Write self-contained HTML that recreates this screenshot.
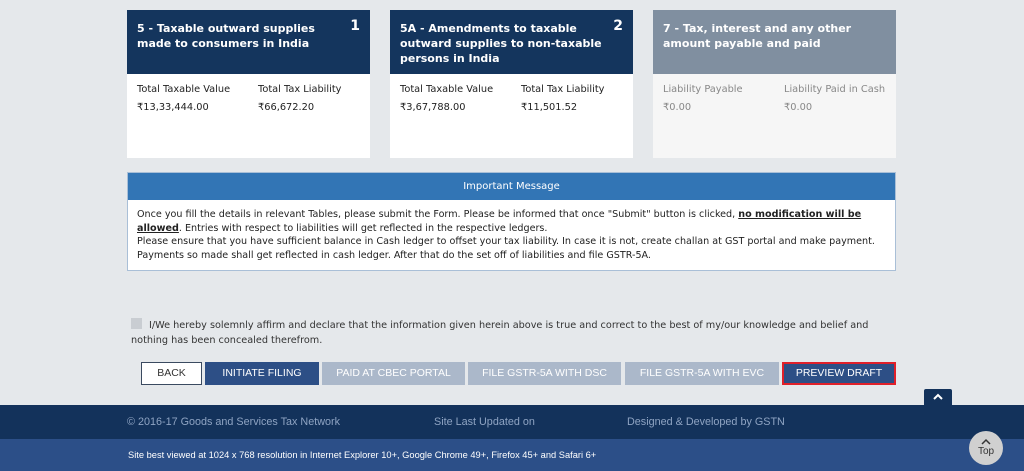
<!DOCTYPE html>
<html><head><meta charset="utf-8"><style>
*{margin:0;padding:0;box-sizing:border-box}
body{width:1024px;height:471px;background:#e5e8eb;font-family:"DejaVu Sans","Liberation Sans",sans-serif;position:relative;overflow:hidden;color:#222}
.card{position:absolute;top:10px;width:243px;height:148px;background:#fff}
.card .h{height:64px;background:#14355d;color:#fff;font-weight:bold;font-size:11px;line-height:15px;padding:11px 10px 0 10px;position:relative}
.card .h .n{position:absolute;right:10px;top:9px;font-size:14px}
.card .b{font-size:9.8px;padding:10px 10px;position:relative}
.card .b div{position:absolute}
.msg{position:absolute;left:127px;top:172px;width:769px;height:99px;background:#fff;border:1px solid #a9bfd7}
.msg .h{height:27px;background:#3275b5;color:#fff;font-size:10px;text-align:center;line-height:27px}
.msg .t{font-size:9.6px;line-height:13.5px;padding:8px 9px}
.aff{position:absolute;left:131px;top:318px;width:740px;font-size:9.7px;line-height:14.5px;color:#333}
.cb{display:inline-block;width:11px;height:11px;background:#c9cdd2;vertical-align:-1px;margin-right:7px}
.btn{position:absolute;top:362px;height:23px;font-family:"Liberation Sans",sans-serif;font-size:10.5px;text-align:center;line-height:23px;color:#fff}
.foot1{position:absolute;left:0;top:405px;width:1024px;height:34px;background:#13325b;color:#8fa4c3;font-family:"Liberation Sans",sans-serif;font-size:10.8px}
.foot2{position:absolute;left:0;top:439px;width:1024px;height:32px;background:#2c4f88;color:#fff;font-family:"Liberation Sans",sans-serif;font-size:9.3px;line-height:32px;padding-left:128px}
</style></head><body>
<div class="card" style="left:127px"><div class="h">5 - Taxable outward supplies<br>made to consumers in India<span class="n">1</span></div>
<div class="b"><div style="left:10px;top:10px">Total Taxable Value</div><div style="left:131px;top:10px">Total Tax Liability</div><div style="left:10px;top:28px">₹13,33,444.00</div><div style="left:131px;top:28px">₹66,672.20</div></div></div>
<div class="card" style="left:390px"><div class="h">5A - Amendments to taxable<br>outward supplies to non-taxable<br>persons in India<span class="n">2</span></div>
<div class="b"><div style="left:10px;top:10px">Total Taxable Value</div><div style="left:131px;top:10px">Total Tax Liability</div><div style="left:10px;top:28px">₹3,67,788.00</div><div style="left:131px;top:28px">₹11,501.52</div></div></div>
<div class="card" style="left:653px;background:#f6f6f6"><div class="h" style="background:#808fa0">7 - Tax, interest and any other<br>amount payable and paid</div>
<div class="b" style="color:#888"><div style="left:10px;top:10px">Liability Payable</div><div style="left:131px;top:10px">Liability Paid in Cash</div><div style="left:10px;top:28px">₹0.00</div><div style="left:131px;top:28px">₹0.00</div></div></div>
<div class="msg"><div class="h">Important Message</div><div class="t">Once you fill the details in relevant Tables, please submit the Form. Please be informed that once "Submit" button is clicked, <b><u>no modification will be allowed</u></b>. Entries with respect to liabilities will get reflected in the respective ledgers.<br>Please ensure that you have sufficient balance in Cash ledger to offset your tax liability. In case it is not, create challan at GST portal and make payment. Payments so made shall get reflected in cash ledger. After that do the set off of liabilities and file GSTR-5A.</div></div>
<div class="aff"><span class="cb"></span>I/We hereby solemnly affirm and declare that the information given herein above is true and correct to the best of my/our knowledge and belief and nothing has been concealed therefrom.</div>
<div class="btn" style="left:141px;width:61px;background:#fff;border:1px solid #3a4a60;color:#333;line-height:21px">BACK</div>
<div class="btn" style="left:205px;width:114px;background:#2d4f86">INITIATE FILING</div>
<div class="btn" style="left:322px;width:143px;background:#abb8ca">PAID AT CBEC PORTAL</div>
<div class="btn" style="left:468px;width:153px;background:#abb8ca">FILE GSTR-5A WITH DSC</div>
<div class="btn" style="left:625px;width:154px;background:#abb8ca">FILE GSTR-5A WITH EVC</div>
<div class="btn" style="left:782px;width:114px;background:#2d4f86;border:2px solid #e0202a;line-height:19px">PREVIEW DRAFT</div>
<div class="foot1"><span style="position:absolute;left:127px;top:11px">© 2016-17 Goods and Services Tax Network</span><span style="position:absolute;left:434px;top:11px">Site Last Updated on</span><span style="position:absolute;left:627px;top:11px">Designed &amp; Developed by GSTN</span></div>
<div style="position:absolute;left:924px;top:389px;width:28px;height:17px;background:#13325b;border-radius:2px 2px 0 0"><svg width="28" height="16"><path d="M10 10 L14 6 L18 10" stroke="#fff" stroke-width="2" fill="none"/></svg></div>
<div class="foot2">Site best viewed at 1024 x 768 resolution in Internet Explorer 10+, Google Chrome 49+, Firefox 45+ and Safari 6+</div>
<div style="position:absolute;left:969px;top:431px;width:34px;height:34px;border-radius:50%;background:#d0d0d0;color:#333;font-family:'Liberation Sans',sans-serif;font-size:10px;text-align:center"><svg width="12" height="8" style="margin-top:7px;display:block;margin-left:11px"><path d="M2 6 L6 2 L10 6" stroke="#333" stroke-width="1.5" fill="none"/></svg>Top</div>
</body></html>
